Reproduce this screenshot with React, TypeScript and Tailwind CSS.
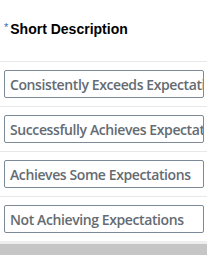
export default function App() {
  const options = [
    'Consistently Exceeds Expectations',
    'Successfully Achieves Expectations',
    'Achieves Some Expectations',
    'Not Achieving Expectations',
  ];

  return (
    <div className="w-[207px] h-[255px] overflow-hidden bg-white flex flex-col">
      {/* header */}
      <div className="h-[61px] pt-[19px] pl-[4px] flex items-start shrink-0">
        <span className="text-[11px] leading-none text-[#2a6ebb] font-['Liberation_Sans',Arial,sans-serif] mt-[3px] mr-[2px]">
          *
        </span>
        <span className="text-[14px] leading-[20px] font-bold text-black font-['Liberation_Sans',Arial,sans-serif]">
          Short Description
        </span>
      </div>

      {/* option rows */}
      {options.map((opt) => (
        <div key={opt} className="border-t border-[#e8e8e8] px-[4px] py-[8px] shrink-0">
          <div className="h-[28px] w-[200px] border border-[#7b8a96] rounded-[2px] pl-[5px] pr-[4px] flex items-center overflow-hidden whitespace-nowrap text-[14px] font-semibold tracking-[-0.4px] text-[#646b72] font-['Open_Sans',sans-serif]">
            {opt}
          </div>
        </div>
      ))}

      {/* footer */}
      <div className="h-[3px] bg-[#eeeeee] shrink-0" />
      <div className="flex-1 bg-[#c6c6c6]" />
    </div>
  );
}
